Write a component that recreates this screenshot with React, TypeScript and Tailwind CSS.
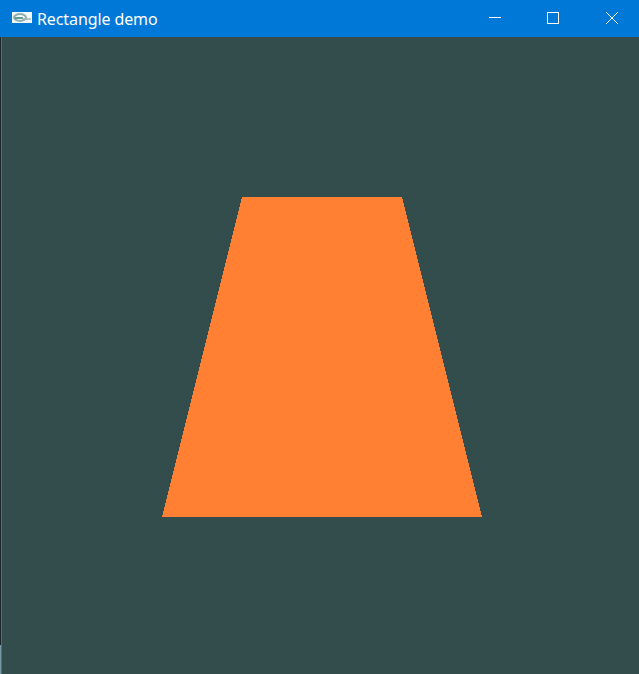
export default function App() {
  return (
    <div className="w-[639px] h-[674px] flex flex-col overflow-hidden bg-[#334c4c]" style={{ fontFamily: '"Noto Sans", sans-serif' }}>
      <div className="h-[37px] shrink-0 bg-[#0078d7] flex items-center text-white">
        <svg className="ml-3 shrink-0 -mt-[3px]" width="20" height="11" viewBox="0 0 20 11">
          <rect width="20" height="11" fill="#f4f8f8" />
          <ellipse cx="8" cy="5.5" rx="6" ry="3.5" fill="none" stroke="#8fb0ae" strokeWidth="2" />
          <path d="M3 6h8" stroke="#2f7f78" strokeWidth="1.5" />
          <path d="M10 7h9" stroke="#9fb4b8" strokeWidth="1.5" />
        </svg>
        <span className="ml-[5px] text-[16px] leading-none tracking-[-0.1px] whitespace-nowrap">Rectangle demo</span>
        <div className="ml-auto flex self-start gap-[46px] pt-3 pr-[21px]">
          <WindowIcon>
            <path d="M0 5.5h12" stroke="white" strokeWidth="1" />
          </WindowIcon>
          <WindowIcon>
            <rect x="0.5" y="0.5" width="11" height="11" fill="none" stroke="white" strokeWidth="1" />
          </WindowIcon>
          <div className="ml-px flex">
            <WindowIcon>
              <path d="M0 0l12 12M12 0L0 12" stroke="white" strokeWidth="1" fill="none" />
            </WindowIcon>
          </div>
        </div>
      </div>
      <div className="flex-1 flex">
        <div className="w-px flex flex-col bg-[#1c262c]">
          <div className="mt-auto h-[29px] bg-[#7a98a8]" />
        </div>
        <div className="w-px bg-[#1f78c0]" />
        <svg width="637" height="637" viewBox="2 37 637 637" className="block">
          <polygon points="242,197 402,197 482,517 162,517" fill="#ff7f33" shapeRendering="crispEdges" />
        </svg>
      </div>
    </div>
  )
}

function WindowIcon({ children }: { children: React.ReactNode }) {
  return <svg width="12" height="12" viewBox="0 0 12 12">{children}</svg>
}
